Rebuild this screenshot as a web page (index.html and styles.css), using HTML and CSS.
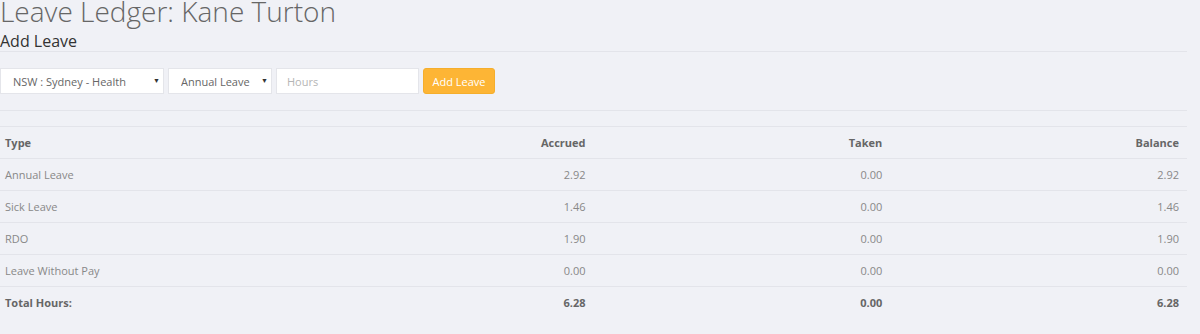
FILE: index.html
```html
<!DOCTYPE html>
<html>
<head>
<meta charset="utf-8">
<link rel="stylesheet" href="styles.css">
</head>
<body>
<div class="page">
  <h1 class="title">Leave Ledger: Kane Turton</h1>
  <h3 class="section">Add Leave</h3>
  <form class="add-form">
    <div class="select-wrap w1">
      <select class="field"><option>NSW : Sydney - Health</option></select>
      <span class="caret">&#9660;</span>
    </div>
    <div class="select-wrap w2">
      <select class="field"><option>Annual Leave</option></select>
      <span class="caret">&#9660;</span>
    </div>
    <input class="field hours" type="text" placeholder="Hours">
    <button class="btn" type="button">Add Leave</button>
  </form>
  <hr class="divider">
  <table class="ledger">
    <thead>
      <tr><th class="left">Type</th><th>Accrued</th><th>Taken</th><th>Balance</th></tr>
    </thead>
    <tbody>
      <tr><td class="left">Annual Leave</td><td>2.92</td><td>0.00</td><td>2.92</td></tr>
      <tr><td class="left">Sick Leave</td><td>1.46</td><td>0.00</td><td>1.46</td></tr>
      <tr><td class="left">RDO</td><td>1.90</td><td>0.00</td><td>1.90</td></tr>
      <tr><td class="left">Leave Without Pay</td><td>0.00</td><td>0.00</td><td>0.00</td></tr>
      <tr class="total"><td class="left">Total Hours:</td><td>6.28</td><td>0.00</td><td>6.28</td></tr>
    </tbody>
  </table>
</div>
</body>
</html>
```

FILE: styles.css
```css
html, body {
  margin: 0;
  padding: 0;
  background: #f0f1f6;
  font-family: "Open Sans", "Liberation Sans", sans-serif;
}
.page {
  width: 1187px;
}
.title {
  margin: 0;
  font-size: 28px;
  font-weight: 300;
  line-height: 22px;
  color: #666;
}
.section {
  margin: 9px 0 0;
  font-size: 16px;
  font-weight: 400;
  line-height: 20px;
  color: #333;
  border-bottom: 1px solid #e3e4ea;
}
.add-form {
  display: flex;
  gap: 4px;
  margin-top: 16px;
  height: 26px;
}
.select-wrap {
  position: relative;
  height: 26px;
}
.w1 { width: 164px; }
.w2 { width: 104px; }
.field {
  box-sizing: border-box;
  height: 26px;
  border: 1px solid #e4e5ea;
  background: #fff;
  font-family: "Open Sans", "Liberation Sans", sans-serif;
  font-size: 11px;
  color: #666;
  border-radius: 0;
  outline: none;
}
select.field {
  -webkit-appearance: none;
  appearance: none;
  width: 100%;
  padding: 0 0 0 12px;
}
.caret {
  position: absolute;
  right: 4px;
  top: 8px;
  font-size: 7px;
  color: #333;
  pointer-events: none;
}
.hours {
  width: 143px;
  padding: 0 10px;
}
.hours::placeholder {
  color: #b5b5b5;
}
.btn {
  box-sizing: border-box;
  height: 26px;
  width: 72px;
  border: 1px solid #f5ae2c;
  border-radius: 3px;
  background: #fdb535;
  color: #fff;
  font-family: "Open Sans", "Liberation Sans", sans-serif;
  font-size: 11px;
  padding: 0;
}
.divider {
  margin: 16px 0 0;
  border: 0;
  border-top: 1px solid #e3e4ea;
  height: 0;
}
.ledger {
  margin-top: 15px;
  width: 1187px;
  border-collapse: collapse;
  table-layout: fixed;
  font-size: 11px;
}
.ledger th, .ledger td {
  height: 32px;
  box-sizing: border-box;
  padding: 0 8px 0 5px;
  text-align: right;
  border-top: 1px solid #e3e4ea;
  vertical-align: middle;
}
.ledger th {
  color: #666;
  font-weight: 700;
}
.ledger td {
  color: #888;
}
.ledger .left {
  text-align: left;
}
.ledger .total td {
  font-weight: 700;
  color: #666;
}
```
